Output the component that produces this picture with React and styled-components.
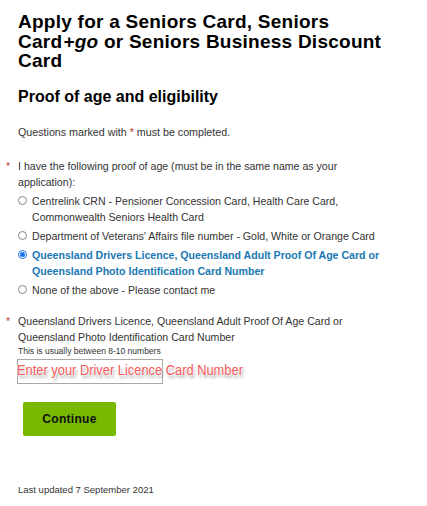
import React from "react";
import styled, { createGlobalStyle } from "styled-components";

const Global = createGlobalStyle`
  html, body { margin: 0; padding: 0; background: #fff; }
  body { font-family: Arial, "Liberation Sans", sans-serif; color: #333; }
`;

const Page = styled.div`
  width: 427px;
  height: 506px;
  box-sizing: border-box;
  padding: 12px 18px 0 18px;
  overflow: hidden;
`;

const Title = styled.h1`
  margin: 0;
  font-size: 19px;
  line-height: 19.5px;
  font-weight: bold;
  color: #000;
  letter-spacing: 0.25px;
  em { font-style: italic; margin-left: 1px; }
`;

const SubTitle = styled.h2`
  margin: 16px 0 0;
  font-size: 16px;
  line-height: 20px;
  font-weight: bold;
  color: #000;
`;

const Form = styled.div`
  width: 370px;
`;

const Note = styled.p`
  margin: 18px 0 0;
  font-size: 10.7px;
  line-height: 14px;
  color: #333;
`;

const Star = styled.span`
  color: #c0392b;
`;

const Question = styled.div`
  position: relative;
  margin-top: ${(p) => p.$top}px;
  font-size: 10.6px;
  line-height: 16px;
  color: #333;
`;

const QStar = styled(Star)`
  position: absolute;
  left: -12px;
  top: 0;
`;

const Options = styled.div`
  display: flex;
  flex-direction: column;
  gap: 3px;
  margin-top: 3px;
`;

const Option = styled.label`
  display: flex;
  align-items: flex-start;
  gap: 5px;
  font-size: 10.6px;
  line-height: 16px;
  color: ${(p) => (p.$checked ? "#1a78b4" : "#333")};
  font-weight: ${(p) => (p.$checked ? "bold" : "normal")};
`;

const Radio = styled.span`
  flex: none;
  width: 9px;
  height: 9px;
  margin-top: 3px;
  border-radius: 50%;
  border: 1px solid ${(p) => (p.$checked ? "#1a73e8" : "#858585")};
  box-sizing: border-box;
  display: flex;
  align-items: center;
  justify-content: center;
  &::after {
    content: "";
    width: 5px;
    height: 5px;
    border-radius: 50%;
    background: ${(p) => (p.$checked ? "#1a73e8" : "transparent")};
  }
`;

const Hint = styled.div`
  font-size: 8.5px;
  line-height: 12px;
  color: #333;
`;

const FieldWrap = styled.div`
  position: relative;
  margin-top: 2px;
  margin-left: -1px;
`;

const Input = styled.div`
  width: 146px;
  height: 25px;
  box-sizing: border-box;
  border: 1px solid #a9a9a9;
  background: #fff;
`;

const Annotation = styled.span`
  position: absolute;
  left: 0;
  top: 2px;
  white-space: nowrap;
  font-size: 15.5px;
  line-height: 18px;
  color: #f55a5a;
  transform: scaleX(0.83);
  transform-origin: left center;
  text-shadow: 0 0 1px #fff, 0 0 2px #fff, 0 0 2px #fff, 2px 3px 3px rgba(0,0,0,0.35);
`;

const Button = styled.button`
  display: block;
  margin: 18px 0 0 5px;
  width: 93px;
  height: 34px;
  border: none;
  border-radius: 2px;
  background: #78b900;
  color: #111;
  font-family: Arial, "Liberation Sans", sans-serif;
  font-weight: bold;
  font-size: 12px;
  letter-spacing: 0.3px;
`;

const Footer = styled.p`
  margin: 48px 0 0;
  font-size: 9.5px;
  line-height: 12px;
  color: #333;
`;

const options = [
  "Centrelink CRN - Pensioner Concession Card, Health Care Card, Commonwealth Seniors Health Card",
  "Department of Veterans' Affairs file number - Gold, White or Orange Card",
  "Queensland Drivers Licence, Queensland Adult Proof Of Age Card or Queensland Photo Identification Card Number",
  "None of the above - Please contact me",
];

export default function App() {
  return (
    <>
      <Global />
      <Page>
        <Title>
          Apply for a Seniors Card, Seniors Card<em>+go</em> or Seniors Business Discount Card
        </Title>
        <SubTitle>Proof of age and eligibility</SubTitle>
        <Form>
          <Note>
            Questions marked with <Star>*</Star> must be completed.
          </Note>
          <Question $top={19}>
            <QStar>*</QStar>
            I have the following proof of age (must be in the same name as your application):
            <Options>
              {options.map((o, i) => (
                <Option key={i} $checked={i === 2}>
                  <Radio $checked={i === 2} />
                  <span>{o}</span>
                </Option>
              ))}
            </Options>
          </Question>
          <Question $top={15}>
            <QStar>*</QStar>
            Queensland Drivers Licence, Queensland Adult Proof Of Age Card or Queensland Photo Identification Card Number
            <Hint>This is usually between 8-10 numbers</Hint>
            <FieldWrap>
              <Input />
              <Annotation>Enter your Driver Licence Card Number</Annotation>
            </FieldWrap>
          </Question>
          <Button>Continue</Button>
          <Footer>Last updated 7 September 2021</Footer>
        </Form>
      </Page>
    </>
  );
}
